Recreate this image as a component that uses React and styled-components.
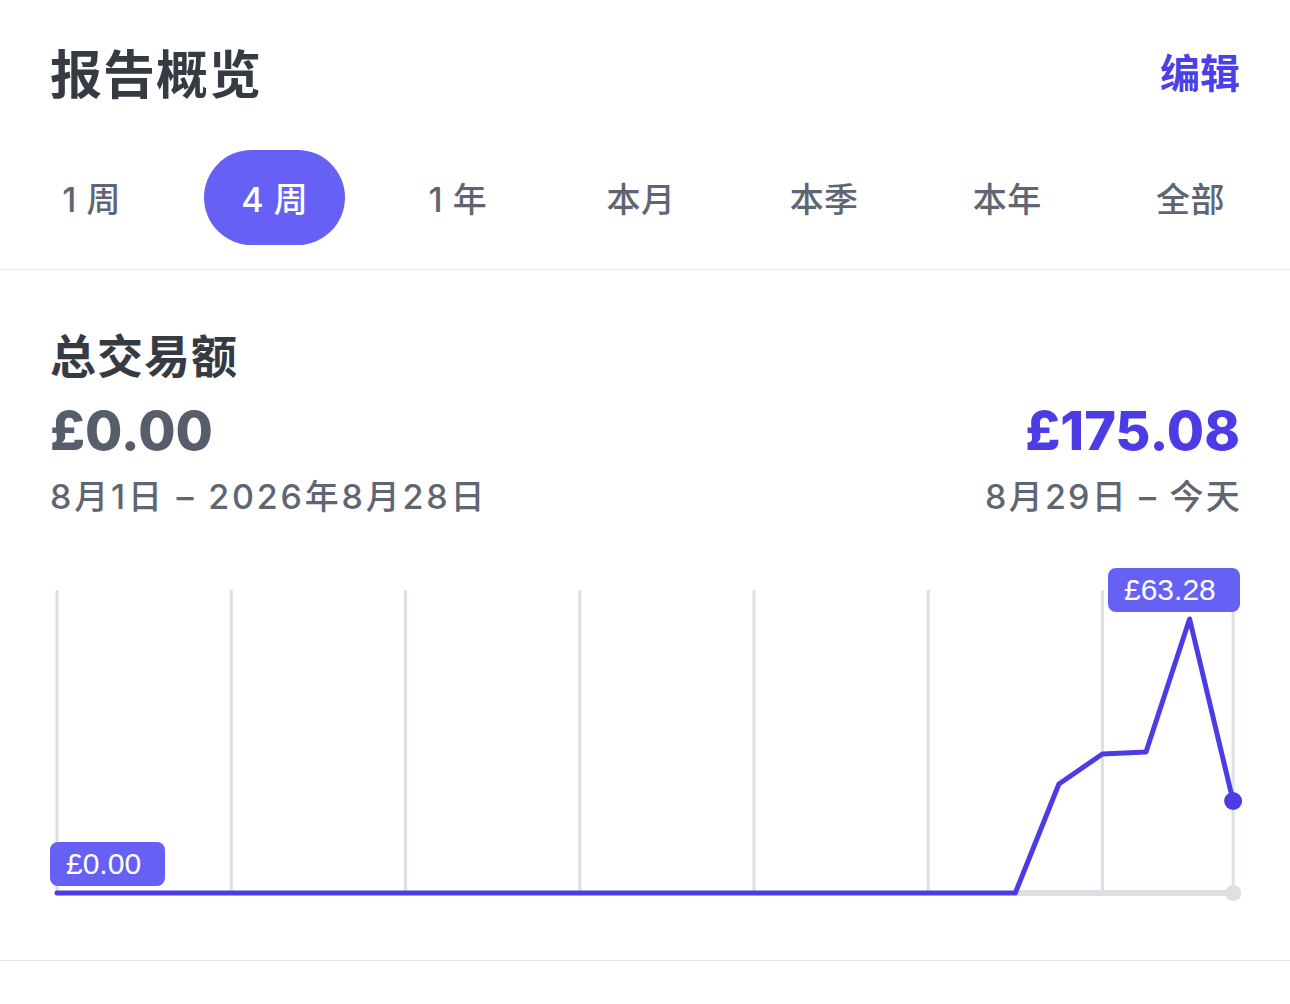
import React from "react";
import styled, { createGlobalStyle } from "styled-components";

const GlobalStyle = createGlobalStyle`
  body {
    margin: 0;
    background: #ffffff;
    font-family: "Inter", "Noto Sans CJK SC", sans-serif;
    -webkit-font-smoothing: antialiased;
  }
`;

const Page = styled.div`
  width: 1290px;
`;

const Header = styled.header`
  display: flex;
  align-items: center;
  justify-content: space-between;
  height: 142px;
  padding: 0 50px;
`;

const Title = styled.h1`
  margin: 0;
  font-size: 52px;
  font-weight: 700;
  color: #363a43;
  letter-spacing: 1px;
`;

const EditLink = styled.a`
  font-size: 40px;
  font-weight: 700;
  color: #4d3fe6;
  cursor: pointer;
`;

const Tabs = styled.nav`
  display: grid;
  grid-template-columns: repeat(7, 1fr);
  align-items: center;
  justify-items: center;
  padding: 8px 8px 24px 0;
  border-bottom: 1px solid #e4e6ea;
`;

const Tab = styled.button`
  height: 95px;
  padding: 0 37px;
  border: none;
  border-radius: 48px;
  background: ${({ $active }) => ($active ? "#6660f5" : "transparent")};
  color: ${({ $active }) => ($active ? "#ffffff" : "#5f6573")};
  font-family: inherit;
  font-size: 34px;
  font-weight: 500;
  letter-spacing: 0.5px;
  white-space: nowrap;
  cursor: pointer;
`;

const Section = styled.section`
  padding: 59px 50px 0;
  border-bottom: 1px solid #e4e6ea;
`;

const SectionTitle = styled.h2`
  margin: 0;
  font-size: 46px;
  font-weight: 700;
  line-height: 55px;
  color: #363a43;
  letter-spacing: 1px;
`;

const Totals = styled.div`
  display: flex;
  justify-content: space-between;
  margin-top: 15px;
`;

const Total = styled.div`
  display: flex;
  flex-direction: column;
  align-items: ${({ $right }) => ($right ? "flex-end" : "flex-start")};
`;

const Amount = styled.div`
  font-size: 54px;
  font-weight: 800;
  line-height: 64px;
  color: ${({ $accent }) => ($accent ? "#4c3ce6" : "#575e6b")};
`;

const Period = styled.div`
  margin-top: 12px;
  margin-right: ${({ $right }) => ($right ? "-2px" : "0")};
  font-size: 34px;
  font-weight: 500;
  line-height: 44px;
  color: #5f6573;
  letter-spacing: ${({ $wide }) => ($wide ? "2.8px" : "2.2px")};
`;

const Chart = styled.div`
  position: relative;
  height: 400px;
  margin: 41px -50px 0;
`;

const Badge = styled.span`
  position: absolute;
  top: ${({ $top }) => $top}px;
  left: ${({ $left }) => $left}px;
  height: 44px;
  padding: 0 24px 0 16px;
  border-radius: 8px;
  background: #6660f5;
  color: #ffffff;
  font-family: "Liberation Sans", Arial, sans-serif;
  font-size: 30px;
  line-height: 44px;
`;

const tabs = ["1 周", "4 周", "1 年", "本月", "本季", "本年", "全部"];

// 28 days across the chart, a grid line every 4 days
const X0 = 57;
const DAY = 43.56;
const BASE = 333;
const values = [
  ...Array(23).fill(0),
  109, 139, 141, 274, 92,
];

const xOf = (i) => X0 + i * DAY;
const yOf = (v) => BASE - v;

function TrendChart() {
  const points = values.map((v, i) => `${xOf(i).toFixed(1)},${yOf(v)}`).join(" ");
  const last = values.length - 1;
  const gridX = [0, 4, 8, 12, 16, 20, 24, last];

  return (
    <Chart>
      <svg width="1290" height="400" viewBox="0 0 1290 400">
        {gridX.map((d) => (
          <line
            key={d}
            x1={xOf(d)}
            x2={xOf(d)}
            y1={30}
            y2={BASE}
            stroke="#dcdfe4"
            strokeWidth="3"
          />
        ))}
        <line
          x1={xOf(22)}
          x2={xOf(last)}
          y1={BASE}
          y2={BASE}
          stroke="#dcdfe4"
          strokeWidth="6"
        />
        <circle cx={xOf(last)} cy={BASE} r="8" fill="#dcdfe4" />
        <polyline
          points={points}
          fill="none"
          stroke="#4c3ce6"
          strokeWidth="5"
          strokeLinejoin="round"
          strokeLinecap="round"
        />
        <circle cx={xOf(last)} cy={yOf(values[last])} r="9" fill="#4c3ce6" />
      </svg>
      <Badge $left={1108} $top={8}>£63.28</Badge>
      <Badge $left={50} $top={282}>£0.00</Badge>
    </Chart>
  );
}

export default function App() {
  return (
    <Page>
      <GlobalStyle />
      <Header>
        <Title>报告概览</Title>
        <EditLink>编辑</EditLink>
      </Header>
      <Tabs>
        {tabs.map((t) => (
          <Tab key={t} $active={t === "4 周"}>
            {t}
          </Tab>
        ))}
      </Tabs>
      <Section>
        <SectionTitle>总交易额</SectionTitle>
        <Totals>
          <Total>
            <Amount>£0.00</Amount>
            <Period $wide>8月1日 – 2026年8月28日</Period>
          </Total>
          <Total $right>
            <Amount $accent>£175.08</Amount>
            <Period $right>8月29日 – 今天</Period>
          </Total>
        </Totals>
        <TrendChart />
      </Section>
    </Page>
  );
}
